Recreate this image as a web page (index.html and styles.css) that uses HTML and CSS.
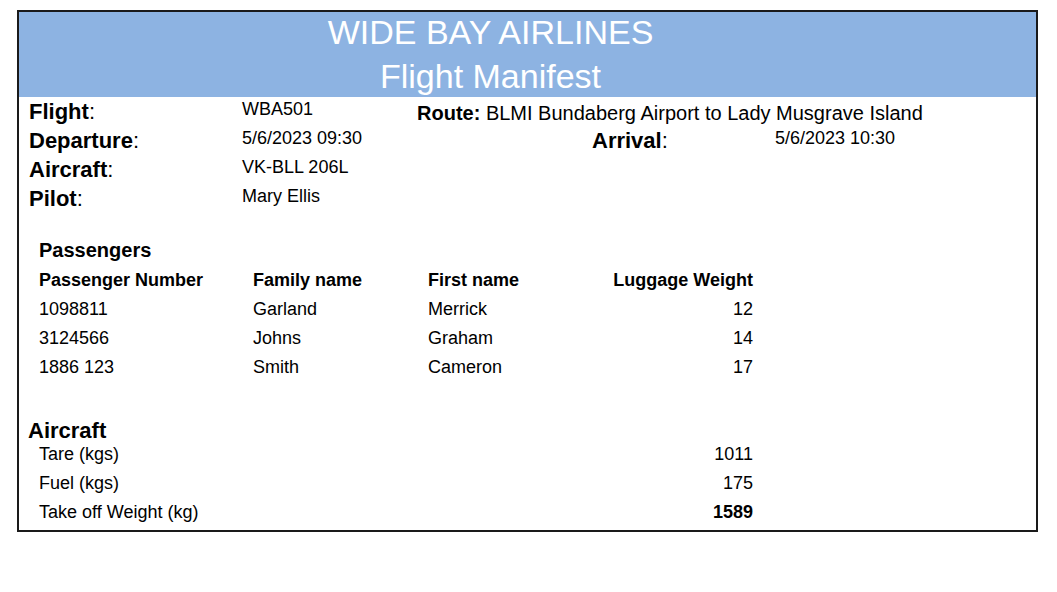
FILE: index.html
```html
<!DOCTYPE html>
<html>
<head>
<meta charset="utf-8">
<link rel="stylesheet" href="styles.css">
</head>
<body>
<div class="report">
  <header class="band">
    <div class="title">WIDE BAY AIRLINES</div>
    <div class="subtitle">Flight Manifest</div>
  </header>

  <section class="info">
    <div class="lbl">Flight<span class="colon">:</span></div>
    <div class="val">WBA501</div>
    <div class="route"><b>Route:</b> BLMI Bundaberg Airport to Lady Musgrave Island</div>

    <div class="lbl">Departure<span class="colon">:</span></div>
    <div class="val">5/6/2023 09:30</div>
    <div class="blank"></div>
    <div class="lbl">Arrival<span class="colon">:</span></div>
    <div class="val">5/6/2023 10:30</div>

    <div class="lbl">Aircraft<span class="colon">:</span></div>
    <div class="val wide">VK-BLL 206L</div>

    <div class="lbl">Pilot<span class="colon">:</span></div>
    <div class="val wide">Mary Ellis</div>
  </section>

  <section class="passengers">
    <div class="sec-title">Passengers</div>
    <div class="table">
      <div class="th">Passenger Number</div>
      <div class="th">Family name</div>
      <div class="th">First name</div>
      <div class="th num">Luggage Weight</div>

      <div>1098811</div><div>Garland</div><div>Merrick</div><div class="num">12</div>
      <div>3124566</div><div>Johns</div><div>Graham</div><div class="num">14</div>
      <div>1886 123</div><div>Smith</div><div>Cameron</div><div class="num">17</div>
    </div>
  </section>

  <section class="aircraft">
    <div class="air-title">Aircraft</div>
    <div class="table air">
      <div class="span3">Tare (kgs)</div><div class="num">1011</div>
      <div class="span3">Fuel (kgs)</div><div class="num">175</div>
      <div class="span3">Take off Weight (kg)</div><div class="num strong">1589</div>
    </div>
  </section>
</div>
</body>
</html>
```

FILE: styles.css
```css
html, body {
  margin: 0;
  padding: 0;
  background: #fff;
}

body {
  font-family: "Liberation Sans", Arial, sans-serif;
  color: #000;
}

.report {
  box-sizing: border-box;
  width: 1021px;
  height: 522px;
  margin: 10px 0 0 17px;
  border: 2px solid #1a1a1a;
}

.band {
  height: 85px;
  background: #8db3e2;
  color: #fff;
  text-align: center;
  padding-right: 74px;
}

.title {
  font-size: 34px;
  line-height: 40px;
}

.subtitle {
  font-size: 34px;
  line-height: 40px;
  margin-top: 4px;
}

.info {
  display: grid;
  grid-template-columns: 213px 175px 175px 183px 1fr;
  grid-auto-rows: 29px;
  padding-left: 10px;
}

.lbl {
  font-size: 22px;
  font-weight: bold;
  line-height: 29px;
}

.colon {
  font-weight: normal;
}

.val {
  font-size: 18px;
  line-height: 24px;
}

.wide {
  grid-column: 2 / 6;
}

.route {
  grid-column: 3 / 6;
  font-size: 20px;
  line-height: 29px;
  padding-top: 2px;
}

.passengers {
  padding-left: 20px;
  margin-top: 21px;
}

.sec-title {
  font-size: 20px;
  font-weight: bold;
  line-height: 32px;
}

.table {
  display: grid;
  grid-template-columns: 214px 175px 175px 150px;
  grid-auto-rows: 29px;
  font-size: 18px;
  line-height: 29px;
}

.th {
  font-weight: bold;
}

.num {
  text-align: right;
}

.strong {
  font-weight: bold;
}

.span3 {
  grid-column: 1 / 4;
}

.aircraft {
  margin-top: 39px;
}

.air-title {
  padding-left: 9px;
  font-size: 22px;
  font-weight: bold;
  line-height: 20px;
  margin-bottom: -1px;
}

.air {
  padding-left: 20px;
}
```
